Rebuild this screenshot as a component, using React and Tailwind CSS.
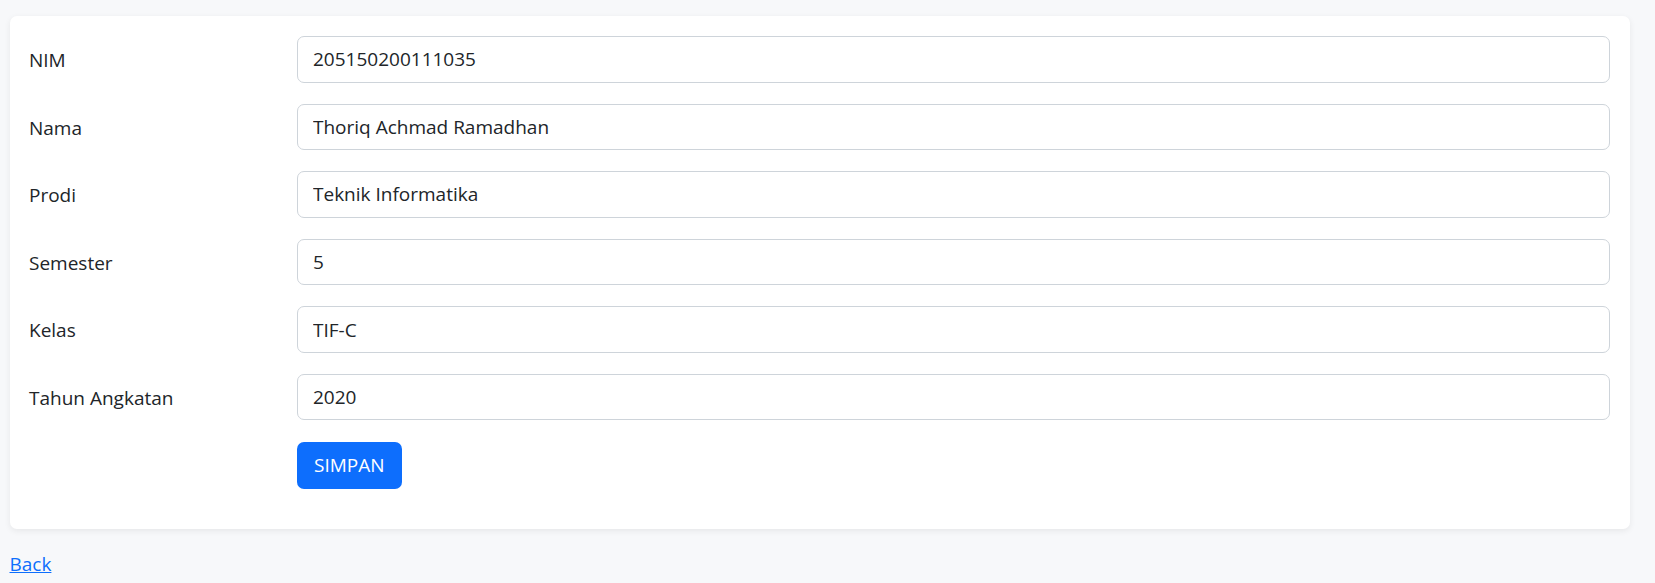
import { useState } from 'react'

const fields = [
    { label: 'NIM', name: 'nim', value: '205150200111035' },
    { label: 'Nama', name: 'nama', value: 'Thoriq Achmad Ramadhan' },
    { label: 'Prodi', name: 'prodi', value: 'Teknik Informatika' },
    { label: 'Semester', name: 'semester', value: '5' },
    { label: 'Kelas', name: 'kelas', value: 'TIF-C' },
    { label: 'Tahun Angkatan', name: 'tahun', value: '2020' },
]

function App() {
    const [form, setForm] = useState(
        Object.fromEntries(fields.map((f) => [f.name, f.value]))
    )
    const onChange = (e) => {
        setForm({ ...form, [e.target.name]: e.target.value })
    }
    return (
        <div
            className="min-h-screen bg-[#f7f8fa] px-[9.5px] pt-[16px] text-[19px] leading-[1.5] text-[#212529]"
            style={{ fontFamily: '"Open Sans", "Noto Sans", sans-serif' }}
        >
            <div className="w-[1620px] bg-white rounded-[7px] shadow-[0_2px_6px_rgba(0,0,0,0.07)] px-[19.5px] pt-[20px] pb-[40px]">
                <form className="flex flex-col gap-[21.1px]">
                    {fields.map((f) => (
                        <div key={f.name} className="flex items-center">
                            <label className="w-[268px] shrink-0 pt-[2px]">{f.label}</label>
                            <input
                                name={f.name}
                                value={form[f.name]}
                                onChange={onChange}
                                className="flex-1 h-[46.5px] border border-[#ced4da] rounded-[7px] px-[15px] outline-none"
                            />
                        </div>
                    ))}
                    <div className="flex">
                        <div className="w-[268px] shrink-0"></div>
                        <button
                            type="button"
                            className="h-[47px] px-[17px] bg-[#0d6efd] text-white rounded-[7px]"
                        >
                            SIMPAN
                        </button>
                    </div>
                </form>
            </div>
            <div className="mt-[21px]">
                <a href="#" className="text-[#0d6efd] underline">
                    Back
                </a>
            </div>
        </div>
    )
}

export default App
